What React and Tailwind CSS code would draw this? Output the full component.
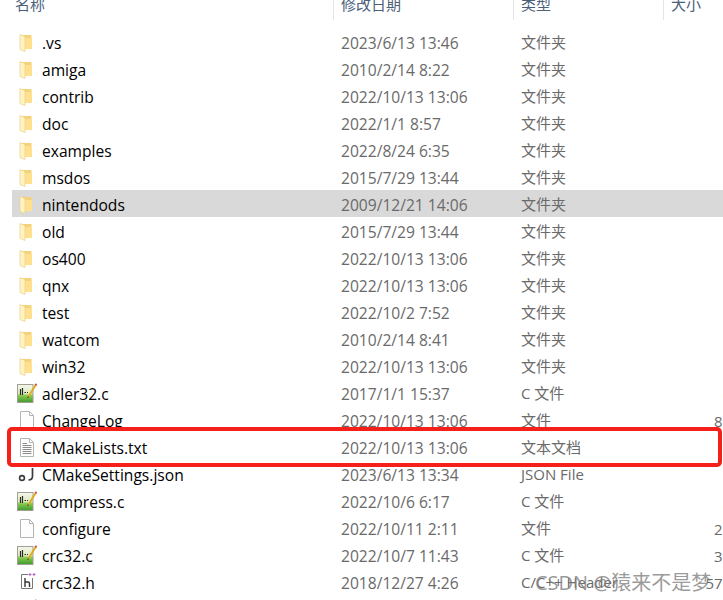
import React from "react";

const FONT = "font-['Open_Sans','Noto_Sans_CJK_SC',sans-serif]";

const ROWS = [
  { name: ".vs", date: "2023/6/13 13:46", type: "文件夹", icon: "folder" },
  { name: "amiga", date: "2010/2/14 8:22", type: "文件夹", icon: "folder" },
  { name: "contrib", date: "2022/10/13 13:06", type: "文件夹", icon: "folder" },
  { name: "doc", date: "2022/1/1 8:57", type: "文件夹", icon: "folder" },
  { name: "examples", date: "2022/8/24 6:35", type: "文件夹", icon: "folder" },
  { name: "msdos", date: "2015/7/29 13:44", type: "文件夹", icon: "folder" },
  { name: "nintendods", date: "2009/12/21 14:06", type: "文件夹", icon: "folder", selected: true },
  { name: "old", date: "2015/7/29 13:44", type: "文件夹", icon: "folder" },
  { name: "os400", date: "2022/10/13 13:06", type: "文件夹", icon: "folder" },
  { name: "qnx", date: "2022/10/13 13:06", type: "文件夹", icon: "folder" },
  { name: "test", date: "2022/10/2 7:52", type: "文件夹", icon: "folder" },
  { name: "watcom", date: "2010/2/14 8:41", type: "文件夹", icon: "folder" },
  { name: "win32", date: "2022/10/13 13:06", type: "文件夹", icon: "folder" },
  { name: "adler32.c", date: "2017/1/1 15:37", type: "C 文件", icon: "c", size: "6 KB" },
  { name: "ChangeLog", date: "2022/10/13 13:06", type: "文件", icon: "file", size: "85 KB" },
  { name: "CMakeLists.txt", date: "2022/10/13 13:06", type: "文本文档", icon: "txt", size: "9 KB" },
  { name: "CMakeSettings.json", date: "2023/6/13 13:34", type: "JSON File", icon: "json", size: "" },
  { name: "compress.c", date: "2022/10/6 6:17", type: "C 文件", icon: "c", size: "3 KB" },
  { name: "configure", date: "2022/10/11 2:11", type: "文件", icon: "file", size: "22 KB" },
  { name: "crc32.c", date: "2022/10/7 11:43", type: "C 文件", icon: "c", size: "32 KB" },
  { name: "crc32.h", date: "2018/12/27 4:26", type: "C/C++ Header", icon: "h", size: "576 KB" },
  { name: "deflate.c", date: "2022/10/13 13:06", type: "C 文件", icon: "c", size: "8 KB" },
];

const FolderIcon = () => (
  <svg width="16" height="20" viewBox="0 0 16 20">
    <path d="M4 2 H14.5 V16 H4 Z" fill="#f3d27a" />
    <path d="M5 5 H15 V16 H5 Z" fill="#ffe08e" />
    <path d="M3 1.5 L8 3.5 V18.5 L3 16.5 Z" fill="#fff3c4" stroke="#efd083" strokeWidth="0.7" />
  </svg>
);

const PageBase = () => (
  <path d="M3.5 1.5 H12.5 L16.5 5.5 V19.5 H3.5 Z M12.5 1.5 V5.5 H16.5" fill="#fdfdfd" stroke="#b4b4b4" />
);

const FileIcon = () => (
  <svg className="-mt-[2px]" width="19" height="20" viewBox="0 0 19 20">
    <PageBase />
  </svg>
);

const TxtIcon = () => (
  <svg className="-mt-[2px]" width="19" height="20" viewBox="0 0 19 20">
    <PageBase />
    <path d="M5.5 6.5 H10 M5.5 8.5 H14.5 M5.5 10.5 H14.5 M5.5 12.5 H14.5 M5.5 14.5 H14.5 M5.5 16.5 H14.5" stroke="#8c8c8c" />
  </svg>
);

const CIcon = () => (
  <svg className="-mt-[2px]" width="21" height="21" viewBox="0 0 21 21">
    <defs>
      <linearGradient id="cfill" x1="0" y1="0" x2="0" y2="1">
        <stop offset="0" stopColor="#f6f6ee" />
        <stop offset="0.5" stopColor="#dcebb8" />
        <stop offset="0.62" stopColor="#86c850" />
        <stop offset="1" stopColor="#3f9a2c" />
      </linearGradient>
    </defs>
    <rect x="0.5" y="1.5" width="15.5" height="18" fill="url(#cfill)" stroke="#a0a094" />
    <path d="M3.5 6 V12 M5.5 5 V12 M7.5 9.5 H9 M10 9.5 H11" stroke="#2a2a2a" strokeWidth="1.2" />
    <path d="M11.5 13.5 L19 1.5" stroke="#e0aa24" strokeWidth="1.9" />
    <path d="M10.6 15 L11.5 13.5" stroke="#6b4a10" strokeWidth="1.3" />
    <path d="M18.4 2.4 L19.4 0.8" stroke="#d8553a" strokeWidth="1.9" />
  </svg>
);

const JsonIcon = () => (
  <svg width="20" height="20" viewBox="0 0 20 20">
    <circle cx="5" cy="13" r="2.4" fill="#fff" stroke="#3c3c3c" strokeWidth="1.6" />
    <path d="M15.5 3 V11 Q15.5 15 11.5 15" fill="none" stroke="#3c3c3c" strokeWidth="1.7" />
  </svg>
);

const HeaderIcon = () => (
  <svg width="20" height="20" viewBox="0 0 20 20">
    <path d="M11 1.5 H4.5 V15.5 H15.5 V5" fill="none" stroke="#777" />
    <path d="M8 5 V14 M8 9 H11 Q12.5 9 12.5 10.5 V14" fill="none" stroke="#333" strokeWidth="1.4" />
    <path d="M11.5 1.5 H14.5 M13 0 V3 M15.5 1.5 H18.5 M17 0 V3" stroke="#b565c8" />
  </svg>
);

const ICONS = {
  folder: FolderIcon,
  file: FileIcon,
  txt: TxtIcon,
  c: CIcon,
  json: JsonIcon,
  h: HeaderIcon,
};

const Row = ({ row }) => {
  const Icon = ICONS[row.icon];
  return (
    <div className={`ml-[12px] flex h-[27px] w-[742px] shrink-0 items-center pt-[3px] ${row.selected ? "bg-[#d9d9d9]" : ""}`}>
      <div className="flex w-[30px] shrink-0 items-center justify-start pl-[5px]">
        <Icon />
      </div>
      <div className="mt-[1px] w-[299px] shrink-0 whitespace-nowrap text-[#000000]">{row.name}</div>
      <div className="mt-[1px] w-[180px] shrink-0 whitespace-nowrap text-[#6a6a6a]">{row.date}</div>
      <div className="-mt-[2px] w-[142px] shrink-0 whitespace-nowrap text-[15px] text-[#6a6a6a]">{row.type}</div>
      <div className="w-[91px] shrink-0 whitespace-nowrap text-right text-[15px] text-[#6a6a6a]">{row.size}</div>
    </div>
  );
};

const HeaderCell = ({ label, className }) => (
  <div className={`flex h-[20px] shrink-0 items-start border-r border-[#e5e5e5] ${className}`}>
    <span className="-mt-[7px] whitespace-nowrap pl-[7px] text-[15px] text-[#4c607a]">{label}</span>
  </div>
);

export default function App() {
  return (
    <div className={`relative h-[600px] w-[723px] overflow-hidden bg-white text-[15.6px] ${FONT}`}>
      <div className="flex w-[860px]">
        <HeaderCell label="名称" className="w-[334px] pl-[8px]" />
        <HeaderCell label="修改日期" className="w-[180px]" />
        <HeaderCell label="类型" className="w-[150px]" />
        <HeaderCell label="大小" className="w-[120px]" />
      </div>
      <div className="mt-[8px] flex flex-col">
        {ROWS.map((row) => (
          <Row key={row.name} row={row} />
        ))}
      </div>
      {/* annotation box drawn over the screenshot */}
      <div className="absolute left-[7px] top-[427px] h-[40px] w-[715px] rounded-[5px] border-[4px] border-[#f5201a]" />
      <div className="absolute left-[535px] top-[568px] whitespace-nowrap text-[20px] text-[#808080]/80">
        CSDN @猿来不是梦
      </div>
    </div>
  );
}
